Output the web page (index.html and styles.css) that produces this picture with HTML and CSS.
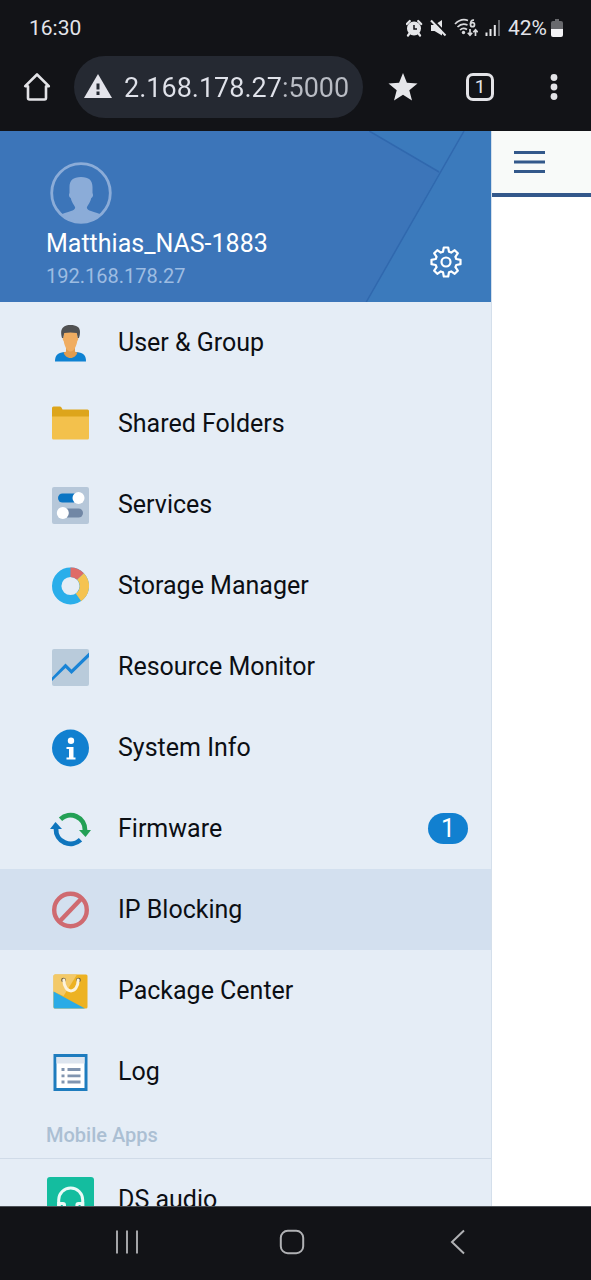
FILE: index.html
```html
<!DOCTYPE html>
<html lang="en">
<head>
<meta charset="utf-8">
<meta name="viewport" content="width=device-width, initial-scale=1">
<title>Matthias_NAS-1883</title>
<link rel="stylesheet" href="styles.css">
</head>
<body>
<div class="phone">
  <div class="status">
    <span class="clock">16:30</span>
    <div class="status-icons">
      <svg width="17" height="18" viewBox="0 0 17 18"><circle cx="8" cy="9.500" r="7" fill="#e6e7ea"/><path d="M.8 5 3.800 2M15.200 5l-3-3M3.500 14.500 2 16.500M12.500 14.500l1.500 2" fill="none" stroke="#e6e7ea" stroke-width="2.200" stroke-linecap="round"/><path d="M8 6V10h3" fill="none" stroke="#121317" stroke-width="1.500"/></svg>
      <svg width="17" height="18" viewBox="0 0 17 18"><path d="M1 6h3.500L12 1v15.500L4.500 12H1z" fill="#e6e7ea"/><path d="M2 0l15 15.500" stroke="#121317" stroke-width="2"/><path d="M1 1.500 15.500 16.500" stroke="#e6e7ea" stroke-width="2"/></svg>
      <svg width="24" height="20" viewBox="0 0 24 20"><g fill="none" stroke="#d9dadd" stroke-width="1.700"><path d="M1 6C5 2 10 1 14 2.500M3.500 9C6.500 6 10 5.500 13.500 7M6 12c2-2 4.500-2.200 7-.5"/><path d="M20 2.200c-2.400-.4-3.500 1.300-3.500 4"/><circle cx="18.500" cy="6.700" r="2"/><path d="M16 11v6M13.800 14.800l2.200 2.400 2.200-2.400M21.500 18v-6M19.300 14.200l2.200-2.400 2.200 2.400"/></g><circle cx="9.500" cy="14.500" r="1.700" fill="#d9dadd"/></svg>
      <svg width="16" height="18" viewBox="0 0 16 18"><path d="M1.500 13.500V17M5.500 10v7M9.800 6v11" stroke="#e6e7ea" stroke-width="2"/><path d="M14 1v16" stroke="#66686d" stroke-width="2"/></svg>
      <span class="battery-text">42%</span>
      <svg width="12" height="18" viewBox="0 0 12 18"><path d="M4 0h4v2h2q2 0 2 2v6H0V4q0-2 2-2h2z" fill="#68696d"/><path d="M0 10h12v6q0 2-2 2H2q-2 0-2-2z" fill="#f3f3f5"/></svg>
    </div>
  </div>

  <div class="toolbar">
    <button class="tool tool-home" aria-label="Home"><svg width="28" height="30" viewBox="0 0 28 30"><path d="M14 2.500 2.200 14.200H5V26q0 1.500 1.500 1.500h15q1.500 0 1.500-1.500V14.200h2.800z" fill="none" stroke="#e3e3e7" stroke-width="2.600" stroke-linejoin="round"/></svg></button>
    <label class="address">
      <svg width="28" height="26" viewBox="0 0 28 26"><path d="M14 0 28 24H0z" fill="#e3e3ea"/><path d="M14 9.500v6M14 17.500v3.500" stroke="#252932" stroke-width="3"/></svg>
      <input class="url" type="text" value="2.168.178.27:5000" aria-label="Address">
    </label>
    <button class="tool tool-star" aria-label="Bookmark"><svg width="30" height="30" viewBox="0 0 30 30"><path d="m15 1 3.900 9.700 10.600.8-8.200 6.700L24 28.500l-9-5.700-9 5.700 2.700-10.300L.5 11.500l10.600-.8z" fill="#e6e6ea"/></svg></button>
    <button class="tool" aria-label="Tabs"><span class="tab-count">1</span></button>
    <button class="tool tool-more" aria-label="More"><svg width="8" height="28" viewBox="0 0 8 28"><g fill="#e3e3e7"><circle cx="4" cy="4.500" r="3.400"/><circle cx="4" cy="14" r="3.400"/><circle cx="4" cy="23.500" r="3.400"/></g></svg></button>
  </div>

  <div class="page">
    <aside class="drawer">
      <header class="profile">
        <svg class="profile-art" viewBox="0 0 492 171" preserveAspectRatio="none"><path d="M0 0h492v171H0z" fill="#3c75b9"/><path d="M370 0h122v171H367L440 41z" fill="#3b7abc"/><path d="m370 0 70 41M465 0l-98 171" stroke="#3068ae" stroke-width="1.500"/></svg>
        <div class="profile-body">
          <div class="identity">
            <svg class="avatar" width="62" height="62" viewBox="0 0 62 62"><g fill="#8bacd8"><path d="M31 15c-8 0-11.500 3.500-11.500 10v6c-1 2-.5 4 1.200 5 .8 4 3.300 7 4.300 9 .6 2-1.500 3-4 4-4 1.300-7 2-9.500 3.500a29.500 29.500 0 0 0 39 0C48 51 45 50.300 41 49c-2.500-1-4.600-2-4-4 1-2 3.500-5 4.300-9 1.700-1 2.200-3 1.200-5v-6c0-6.500-3.500-10-11.500-10z"/></g><circle cx="31" cy="31" r="29.300" fill="none" stroke="#8bacd8" stroke-width="2.800"/></svg>
            <div class="name">Matthias_NAS-1883</div>
            <div class="ip">192.168.178.27</div>
          </div>
          <button class="gear" aria-label="Settings"><svg width="32" height="32" viewBox="0 0 32 32"><g fill="none" stroke="#fff" stroke-width="2.200"><path stroke-linejoin="round" d="M13.800 1.500h4.400l.8 4.200 2.200.9 3.500-2.400 3.100 3.100-2.400 3.500.9 2.200 4.200.8v4.400l-4.200.8-.9 2.200 2.400 3.500-3.100 3.100-3.500-2.400-2.200.9-.8 4.200h-4.400l-.8-4.200-2.200-.9-3.500 2.400-3.100-3.100 2.400-3.500-.9-2.200-4.200-.8v-4.400l4.200-.8.900-2.200-2.400-3.500 3.100-3.100 3.500 2.400 2.200-.9z"/><circle cx="16" cy="16" r="4.500"/></g></svg></button>
        </div>
      </header>

      <nav class="menu">
        <a class="item" href="#"><svg class="icon" viewBox="0 0 48 48"><path d="M9 42.500c0-6.500 2.500-8.500 9-9.500h13c6.500 1 9 3 9 9.500z" fill="#0e82d2"/><path d="M20 27h9v5.500c1 .6 1.500.8 2.500 1-1 3-3.500 5.500-7 5.500s-6-2.500-7-5.500c1-.2 1.500-.4 2.500-1z" fill="#e19c4e"/><path d="M17.500 12h14v6c1.200.5 1 3-.2 4-.8 5-3.300 10.500-6.800 10.500s-6-5.500-6.800-10.500c-1.200-1-1.400-3.500-.2-4z" fill="#f0ad61"/><path d="M16 19c-1-4-1.500-8 1-10.500 2-2 4.500-2.500 7.500-2.500 6 0 9.500 2 9.500 7 0 2-.3 4-1 6h-1.200l-1-5q-6.400-1.200-12.600 0l-1 5z" fill="#505152"/></svg>User &amp; Group</a>
        <a class="item" href="#"><svg class="icon" viewBox="0 0 48 48"><path d="M6 18V8q0-1.500 1.500-1.500H14q1.200 0 2 2l.5 1H41.500q1.500 0 1.500 1.500v7z" fill="#dda51b"/><path d="M6 16.500h37V38q0 1.500-1.500 1.500h-34Q6 39.500 6 38z" fill="#f3c14c"/></svg>Shared Folders</a>
        <a class="item" href="#"><svg class="icon" viewBox="0 0 48 48"><rect x="6" y="6" width="37" height="37" rx="2" fill="#b6c7d9"/><rect x="12" y="12.500" width="24" height="9" rx="4.500" fill="#0b75c3"/><rect x="13" y="27.500" width="24" height="9" rx="4.500" fill="#7187a5"/><circle cx="32.500" cy="17" r="6" fill="#fff"/><circle cx="16.800" cy="32" r="6" fill="#fff"/></svg>Services</a>
        <a class="item" href="#"><svg class="icon" viewBox="0 0 48 48"><circle cx="24.500" cy="24" r="13.800" fill="none" stroke="#2aaeea" stroke-width="9.400"/><path d="M24.500 10.200a13.800 13.800 0 0 1 10 4.300" fill="none" stroke="#df6b67" stroke-width="9.400"/><path d="M34.500 14.500a13.800 13.800 0 0 1-2 20.900" fill="none" stroke="#f5c351" stroke-width="9.400"/></svg>Storage Manager</a>
        <a class="item" href="#"><svg class="icon" viewBox="0 0 48 48"><rect x="6" y="6" width="37" height="37" rx="2" fill="#b9cbdb"/><path d="M6 34.500 19.500 20.500l6 6L43 9.500v4.500L25.500 31l-6-6L6 38z" fill="#1984d6"/></svg>Resource Monitor</a>
        <a class="item" href="#"><svg class="icon" viewBox="0 0 48 48"><circle cx="24.500" cy="24" r="18.500" fill="#1180d0"/><circle cx="25" cy="16.800" r="3.200" fill="#fff"/><path d="M20.500 23H27.500v10.500H29.500V35.500h-9V33.500h2.500V25h-2.500z" fill="#fff"/></svg>System Info</a>
        <a class="item" href="#"><svg class="icon" viewBox="0 0 48 48"><g fill="none" stroke-width="4.800"><path d="M14.500 14.200a14.500 14.500 0 0 1 24.500 11" stroke="#23a055"/><path d="M34.500 34.800A14.500 14.500 0 0 1 10 23.800" stroke="#0f75bd"/></g><path d="M33 25h12l-5.500 7z" fill="#23a055"/><path d="M4 24h12L9.500 17z" fill="#0f75bd"/></svg>Firmware<span class="badge">1</span></a>
        <a class="item item-active" href="#"><svg class="icon" viewBox="0 0 48 48"><g fill="none" stroke="#cf6a70" stroke-width="4.400"><circle cx="24.500" cy="24" r="16.300"/><path d="M13.500 35.500l22-23"/></g></svg>IP Blocking</a>
        <a class="item" href="#"><svg class="icon" viewBox="0 0 48 48"><rect x="7.500" y="7.500" width="34" height="34" rx="1.500" fill="#edb222"/><path d="M9 7.500h22L17.500 29l-10-4.500V9q0-1.500 1.500-1.500z" fill="#f3c968"/><path d="M7.500 24.500 39 41.500H9q-1.500 0-1.500-1.500z" fill="#2aabe6"/><circle cx="17.500" cy="13" r="2.300" fill="#66593a"/><circle cx="32.500" cy="13" r="2.300" fill="#66593a"/><path d="M17.800 13c.2 14.500 14.200 14.500 14.400 0" fill="none" stroke="#fcf3dc" stroke-width="3" stroke-linecap="round"/></svg>Package Center</a>
        <a class="item" href="#"><svg class="icon" viewBox="0 0 48 48"><rect x="9" y="7.500" width="31" height="34" fill="#fff" stroke="#1e7cbe" stroke-width="3"/><path d="M10.500 9h28v6.500h-28z" fill="#dde5ef"/><path d="M15.500 21.500h3M15.500 27.800h3M15.500 34h3M21.500 21.500h13M21.500 27.800h13M21.500 34h13" stroke="#8195b0" stroke-width="2.800"/></svg>Log</a>
        <h2 class="section">Mobile Apps</h2>
        <a class="item" href="#"><svg class="icon" viewBox="0 0 48 48"><rect x="1" y="1" width="47" height="47" rx="3" fill="#14bd9f"/><path d="M12.700 34V24a12 12 0 0 1 24 0v10" fill="none" stroke="#eafaf7" stroke-width="3"/><path d="M11.200 26H17q3 0 3 3v8h-6q-2.800 0-2.800-3zM38.200 26h-5.800q-3 0-3 3v8h6q2.800 0 2.800-3z" fill="#eafaf7"/><path d="M15.800 29v5M33.600 29v5" stroke="#14bd9f" stroke-width="2"/></svg>DS audio</a>
      </nav>
    </aside>
    <main class="content">
      <div class="content-bar">
        <button class="hamburger" aria-label="Menu"><svg width="32" height="24" viewBox="0 0 32 24"><path d="M0 2.500h31M0 12h31M0 21.500h31" stroke="#33588b" stroke-width="3"/></svg></button>
      </div>
    </main>
  </div>

  <div class="system-nav">
    <button class="sys" aria-label="Recents"><svg width="24" height="26" viewBox="0 0 24 26"><path d="M2 1.500v23M12 1.500v23M22 1.500v23" stroke="#a4a5a8" stroke-width="2"/></svg></button>
    <button class="sys" aria-label="Home screen"><svg width="26" height="26" viewBox="0 0 26 26"><rect x="1.800" y="1.800" width="22.400" height="22.400" rx="7" fill="none" stroke="#b0b1b4" stroke-width="2"/></svg></button>
    <button class="sys" aria-label="Back"><svg width="16" height="26" viewBox="0 0 16 26"><path d="M14 1.500 2 13l12 11.500" fill="none" stroke="#b0b1b4" stroke-width="2"/></svg></button>
  </div>
</div>
</body>
</html>
```
FILE: styles.css
```css
* {
  box-sizing: border-box;
}

body {
  margin: 0;
  font-family: Roboto, "Liberation Sans", sans-serif;
  background: #121317;
}

button {
  display: flex;
  align-items: center;
  justify-content: center;
  padding: 0;
  border: 0;
  background: none;
  font: inherit;
  color: inherit;
}

svg {
  display: block;
  flex: none;
}

.phone {
  display: flex;
  flex-direction: column;
  height: 100vh;
  color: #e3e4ea;
}

.status {
  display: flex;
  align-items: center;
  justify-content: space-between;
  height: 56px;
  padding: 0 28px 0 29px;
  font-size: 21px;
}

.status-icons {
  display: flex;
  align-items: center;
  gap: 7px;
}

.battery-text {
  margin-right: -3px;
}

.toolbar {
  display: flex;
  height: 75px;
  padding-bottom: 13px;
}

.tool {
  width: 78px;
}

.tool-home {
  width: 74px;
}

.tool-star {
  padding-left: 2px;
}

.tool-more {
  width: 72px;
  padding-right: 2px;
}

.address {
  display: flex;
  flex: 1;
  align-items: center;
  gap: 12px;
  min-width: 0;
  padding: 0 12px 0 10px;
  border-radius: 31px;
  background: #252932;
}

.url {
  flex: 1;
  min-width: 0;
  padding: 2px 0 0;
  border: 0;
  outline: 0;
  font: inherit;
  font-size: 27px;
  line-height: 36px;
  color: transparent;
  background: linear-gradient(90deg, #e0e2ea 159px, #b9bcc4 159px) text;
}

.tab-count {
  width: 28px;
  height: 28px;
  border: 3px solid #e3e3e7;
  border-radius: 7px;
  font-size: 19px;
  line-height: 22px;
  text-align: center;
}

.page {
  display: flex;
  flex: 1;
  min-height: 0;
  overflow: hidden;
  background: #fff;
}

.drawer {
  width: calc(100% - 99px);
  overflow: hidden;
  border-right: 1px solid #d4dfeb;
  background: #e5edf6;
}

.profile {
  display: grid;
}

.profile-art,
.profile-body {
  grid-area: 1 / 1;
}

.profile-art {
  width: 100%;
  height: 100%;
}

.profile-body {
  display: flex;
  align-items: flex-end;
  justify-content: space-between;
  padding: 31px 29px 12px 46px;
}

.avatar {
  margin: 0 0 2px 4px;
}

.name {
  font-size: 25px;
  line-height: 36px;
  color: #fff;
}

.ip {
  font-size: 20px;
  line-height: 28px;
  color: #9dbce2;
}

.gear {
  margin-bottom: 12px;
}

.item {
  display: flex;
  align-items: center;
  gap: 24px;
  height: 81px;
  padding: 0 23px 0 46px;
  font-size: 25px;
  color: #0c0f14;
  text-decoration: none;
}

.item-active {
  background: #d3e0ef;
}

.icon {
  width: 48px;
  height: 48px;
}

.badge {
  width: 40px;
  margin-left: auto;
  border-radius: 16px;
  font-size: 25px;
  line-height: 31px;
  text-align: center;
  color: #fff;
  background: #1180d0;
}

.section {
  margin: 0;
  padding-left: 46px;
  border-bottom: 1px solid #d0dbe8;
  font-size: 20px;
  font-weight: 500;
  line-height: 46px;
  color: #abbfd3;
}

.content {
  flex: 1;
}

.content-bar {
  display: flex;
  align-items: center;
  height: 66px;
  padding-left: 22px;
  border-bottom: 4px solid #33588b;
  background: #f8faf9;
}

.system-nav {
  display: grid;
  grid-template-columns: repeat(3, 1fr);
  height: 74px;
  padding: 0 50px 4px 44px;
  border-top: 1px solid #4c5157;
}
```
